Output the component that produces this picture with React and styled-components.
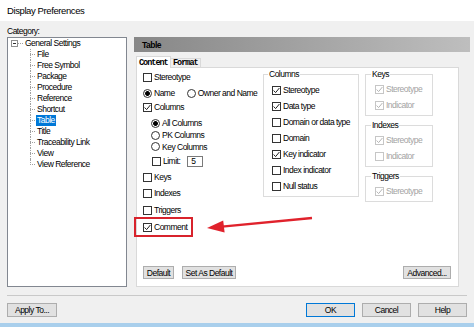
import React from 'react'
import styled, { createGlobalStyle } from 'styled-components'

const UI = '"Liberation Sans", Arial, sans-serif';
const MONO = '"Liberation Mono", "Courier New", monospace';

const GlobalStyle = createGlobalStyle`
    html, body { margin: 0; padding: 0; }
    body {
        background: #f0f0f0;
        font-family: ${UI};
        font-size: 8.5px;
        letter-spacing: -0.5px;
        color: #000;
    }
    * { box-sizing: border-box; }
`;

const Window = styled.div`
    position: relative;
    width: 474px;
    height: 327px;
    display: flex;
    flex-direction: column;
    background: #f0f0f0;
    overflow: hidden;
`;

const TitleBar = styled.div`
    height: 21px;
    flex: none;
    background: #fff;
    display: flex;
    align-items: center;
    padding-left: 7px;
    font-size: 9.5px;
    letter-spacing: -0.4px;
`;

const Body = styled.div`
    flex: 1;
    display: flex;
    flex-direction: column;
    padding: 0 7px;
`;

const Caption = styled.div`
    height: 16px;
    padding-top: 5px;
    line-height: 11px;
`;

const MainRow = styled.div`
    display: flex;
    gap: 6px;
    height: 250px;
`;

/* ---------- tree ---------- */

const Tree = styled.div`
    width: 120px;
    flex: none;
    background: #fff;
    border: 1px solid #828790;
`;

const TreeRoot = styled.div`
    height: 11px;
    display: flex;
    align-items: center;
    padding-left: 3px;
`;

const Connector = styled.span`
    width: 5px;
    margin-right: 1px;
    border-top: 1px dotted #a0a0a0;
`;

const TreeChildren = styled.div`
    padding-left: 22px;
`;

const TreeItem = styled.div`
    position: relative;
    height: 11px;
    display: flex;
    align-items: center;
    padding-left: 6px;

    &::before {
        content: '';
        position: absolute;
        left: 0;
        top: 5px;
        width: 5px;
        border-top: 1px dotted #a0a0a0;
    }
    &::after {
        content: '';
        position: absolute;
        left: 0;
        top: 0;
        height: ${p => (p.$last ? '6px' : '11px')};
        border-left: 1px dotted #a0a0a0;
    }
`;

const TreeText = styled.span`
    padding: 0 1px;
    line-height: 11px;
    background: ${p => (p.$selected ? '#0078d7' : 'transparent')};
    color: ${p => (p.$selected ? '#fff' : '#000')};
`;

/* ---------- right panel ---------- */

const RightPanel = styled.div`
    flex: 1;
    display: flex;
    flex-direction: column;
    margin-right: -3px;
`;

const PanelHeader = styled.div`
    height: 15px;
    margin-left: 1px;
    background: linear-gradient(90deg, #878787, #bebebe);
    display: flex;
    align-items: center;
    padding-left: 8px;
    font-weight: bold;
`;

const PageArea = styled.div`
    flex: 1;
    display: flex;
    flex-direction: column;
    padding: 4px 11px 0 3px;
`;

const Tabs = styled.div`
    display: flex;
    align-items: flex-end;
    height: 12px;
    margin-bottom: -1px;
    position: relative;
    z-index: 1;
`;

const Tab = styled.div`
    width: ${p => p.$w}px;
    height: ${p => (p.$active ? 12 : 10)}px;
    background: ${p => (p.$active ? '#fff' : '#f0f0f0')};
    border: 1px solid #d9d9d9;
    border-bottom: ${p => (p.$active ? 'none' : '1px solid #d9d9d9')};
    border-left: ${p => (p.$active ? '1px solid #d9d9d9' : 'none')};
    font-family: ${MONO};
    font-size: 8.5px;
    font-weight: bold;
    letter-spacing: -1px;
    display: flex;
    align-items: center;
    padding-left: 2px;
`;

const TabPage = styled.div`
    flex: 1;
    background: #fff;
    border: 1px solid #d9d9d9;
    display: flex;
    flex-direction: column;
    padding: 1px 7px 7px 6px;
`;

const Columns = styled.div`
    display: grid;
    grid-template-columns: 114px 96px 68px;
    column-gap: 6px;
    align-items: start;
`;

const Stack = styled.div`
    display: flex;
    flex-direction: column;
    gap: ${p => p.$gap || 0}px;
`;

const Row = styled.div`
    display: flex;
    align-items: center;
    height: ${p => p.$h || 16}px;
    margin-top: ${p => p.$mt || 0}px;
    padding-left: ${p => p.$indent || 0}px;
`;

const Group = styled.fieldset`
    margin: 0;
    padding: 2px 0 2px ${p => p.$pl || 9}px;
    border: 1px solid #dcdcdc;
    min-width: 0;

    legend {
        padding: 0 1px;
        margin-left: -4px;
        height: 10px;
        line-height: 10px;
    }
`;

const Label = styled.label`
    display: inline-flex;
    align-items: center;
    gap: 2px;
    margin-right: ${p => p.$mr || 0}px;
    color: ${p => (p.$disabled ? '#a3a3a3' : '#000')};
    white-space: nowrap;
`;

const Box = styled.span`
    width: 9px;
    height: 9px;
    flex: none;
    border: 1px solid ${p => (p.$disabled ? '#c6c6c6' : '#333')};
    background: #fff;
    display: flex;
    align-items: center;
    justify-content: center;
`;

const Dot = styled.span`
    width: 9px;
    height: 9px;
    flex: none;
    border: 1px solid #333;
    border-radius: 50%;
    background: ${p => (p.$on ? 'radial-gradient(circle, #000 0 2.1px, #fff 2.6px)' : '#fff')};
`;

const NumberBox = styled.span`
    width: 16px;
    height: 11px;
    margin-left: 7px;
    border: 1px solid #7a7a7a;
    background: #fff;
    padding-left: 3px;
    line-height: 9px;
`;

const Highlight = styled.div`
    margin-left: -9px;
    margin-top: -1px;
    width: 59px;
    height: 20px;
    border: 2px solid #d8232c;
    padding-left: 7px;
    display: flex;
    align-items: center;
`;

const ButtonRow = styled.div`
    margin-top: auto;
    display: flex;
    gap: ${p => p.$gap || 8}px;
`;

const Button = styled.button`
    width: ${p => p.$w}px;
    height: ${p => p.$h || 13}px;
    margin-left: ${p => (p.$push ? 'auto' : '0')};
    padding: 0;
    background: #e1e1e1;
    border: 1px solid ${p => (p.$default ? '#0078d7' : '#adadad')};
    font-family: ${UI};
    font-size: 8.5px;
    letter-spacing: -0.5px;
    white-space: nowrap;
    color: #000;
`;

const Separator = styled.div`
    margin-top: 8px;
    border-top: 1px solid #c9c9c9;
`;

const Footer = styled.div`
    margin-top: 7px;
    display: flex;
    gap: 7px;
`;

const FrameEdge = styled.div`
    height: 4px;
    flex: none;
    background: #a9cfec;
`;

const Overlay = styled.svg`
    position: absolute;
    left: 0;
    top: 0;
    pointer-events: none;
`;

/* ---------- small pieces ---------- */

const Check = ({ checked, disabled, children, mr }) => (
    <Label $disabled={disabled} $mr={mr}>
        <Box $disabled={disabled}>
            {checked && (
                <svg width="7" height="7" viewBox="0 0 7 7">
                    <polyline points="0.6,3.5 2.6,5.6 6.4,1" fill="none"
                        stroke={disabled ? '#b5b5b5' : '#222'} strokeWidth="1" />
                </svg>
            )}
        </Box>
        {children}
    </Label>
);

const Radio = ({ on, children, mr }) => (
    <Label $mr={mr}>
        <Dot $on={on} />
        {children}
    </Label>
);

const Expander = () => (
    <svg width="7" height="7" viewBox="0 0 7 7" style={{ flex: 'none' }}>
        <rect x="0.5" y="0.5" width="6" height="6" fill="#fff" stroke="#8f8f8f" />
        <line x1="2" y1="3.5" x2="5" y2="3.5" stroke="#333" />
    </svg>
);

const treeItems = ['File', 'Free Symbol', 'Package', 'Procedure', 'Reference', 'Shortcut',
    'Table', 'Title', 'Traceability Link', 'View', 'View Reference'];

const App = () => {
    return (
        <Window>
            <GlobalStyle />
            <TitleBar>Display Preferences</TitleBar>
            <Body>
                <Caption>Category:</Caption>
                <MainRow>
                    <Tree>
                        <TreeRoot>
                            <Expander />
                            <Connector />
                            <TreeText>General Settings</TreeText>
                        </TreeRoot>
                        <TreeChildren>
                            {treeItems.map((t, i) => (
                                <TreeItem key={t} $last={i === treeItems.length - 1}>
                                    <TreeText $selected={t === 'Table'}>{t}</TreeText>
                                </TreeItem>
                            ))}
                        </TreeChildren>
                    </Tree>

                    <RightPanel>
                        <PanelHeader>Table</PanelHeader>
                        <PageArea>
                            <Tabs>
                                <Tab $active $w={35}>Content</Tab>
                                <Tab $w={30}>Format</Tab>
                            </Tabs>
                            <TabPage>
                                <Columns>
                                    <Stack>
                                        <Row><Check>Stereotype</Check></Row>
                                        <Row>
                                            <Radio on mr={12}>Name</Radio>
                                            <Radio>Owner and Name</Radio>
                                        </Row>
                                        <Row $h={12}><Check checked>Columns</Check></Row>
                                        <Row $h={12} $mt={4} $indent={8}><Radio on>All Columns</Radio></Row>
                                        <Row $h={12} $indent={8}><Radio>PK Columns</Radio></Row>
                                        <Row $h={11} $indent={8}><Radio>Key Columns</Radio></Row>
                                        <Row $h={18} $indent={9}>
                                            <Check>Limit:</Check>
                                            <NumberBox>5</NumberBox>
                                        </Row>
                                        <Row $h={14}><Check>Keys</Check></Row>
                                        <Row $mt={1}><Check>Indexes</Check></Row>
                                        <Row $mt={1}><Check>Triggers</Check></Row>
                                        <Highlight>
                                            <Check checked>Comment</Check>
                                        </Highlight>
                                    </Stack>

                                    <Group $pl={8}>
                                        <legend>Columns</legend>
                                        <Row $mt={1}><Check checked>Stereotype</Check></Row>
                                        <Row><Check checked>Data type</Check></Row>
                                        <Row><Check>Domain or data type</Check></Row>
                                        <Row><Check>Domain</Check></Row>
                                        <Row><Check checked>Key indicator</Check></Row>
                                        <Row><Check>Index indicator</Check></Row>
                                        <Row><Check>Null status</Check></Row>
                                    </Group>

                                    <Stack $gap={4}>
                                        <Group>
                                            <legend>Keys</legend>
                                            <Row><Check checked disabled>Stereotype</Check></Row>
                                            <Row><Check checked disabled>Indicator</Check></Row>
                                        </Group>
                                        <Group>
                                            <legend>Indexes</legend>
                                            <Row><Check checked disabled>Stereotype</Check></Row>
                                            <Row><Check disabled>Indicator</Check></Row>
                                        </Group>
                                        <Group>
                                            <legend>Triggers</legend>
                                            <Row><Check checked disabled>Stereotype</Check></Row>
                                        </Group>
                                    </Stack>
                                </Columns>

                                <ButtonRow>
                                    <Button $w={31}>Default</Button>
                                    <Button $w={54}>Set As Default</Button>
                                    <Button $w={48} $push>Advanced...</Button>
                                </ButtonRow>
                            </TabPage>
                        </PageArea>
                    </RightPanel>
                </MainRow>

                <Separator />
                <Footer>
                    <Button $w={50} $h={14}>Apply To...</Button>
                    <Button $w={49} $h={14} $push $default>OK</Button>
                    <Button $w={49} $h={14}>Cancel</Button>
                    <Button $w={49} $h={14}>Help</Button>
                </Footer>
            </Body>
            <FrameEdge />

            <Overlay width="474" height="327" viewBox="0 0 474 327">
                <line x1="312" y1="218" x2="222" y2="226.6" stroke="#e0222c" strokeWidth="2.4" />
                <polygon points="207,228 223.2,220.4 224.6,232.4" fill="#e0222c" />
            </Overlay>
        </Window>
    )
}

export default App;
